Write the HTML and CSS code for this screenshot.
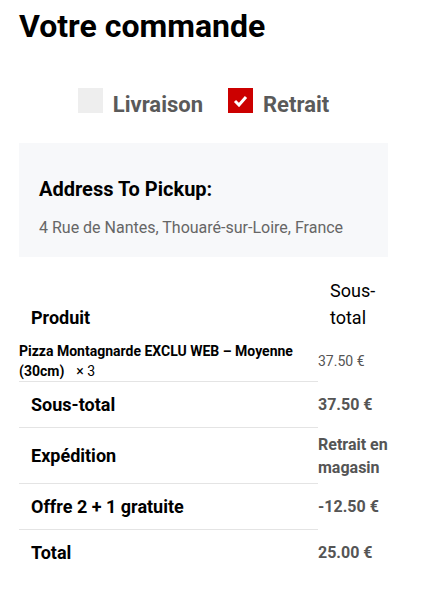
FILE: index.html
```html
<!DOCTYPE html>
<html lang="fr">
<head>
  <meta charset="UTF-8" />
  <meta name="viewport" content="width=device-width, initial-scale=1.0" />
  <title>Votre commande</title>
  <link rel="stylesheet" href="styles.css">
</head>
<body>
  <div class="container">
    <h1>Votre commande</h1>

    <div class="mode-choice">
      <label class="mode">
        <span class="box"></span>
        <span class="mode-label">Livraison</span>
      </label>
      <label class="mode">
        <span class="box checked">
          <svg width="15" height="12" viewBox="0 0 15 12"><polyline points="2,6 6,10 13,2" fill="none" stroke="#fff" stroke-width="3"/></svg>
        </span>
        <span class="mode-label">Retrait</span>
      </label>
    </div>

    <div class="pickup">
      <h3>Address To Pickup:</h3>
      <p>4 Rue de Nantes, Thouaré-sur-Loire, France</p>
    </div>

    <table class="order-table">
      <thead>
        <tr>
          <th class="col-product">Produit</th>
          <th class="col-total">Sous-total</th>
        </tr>
      </thead>
      <tbody>
        <tr class="cart-item">
          <td class="product-name">Pizza Montagnarde EXCLU WEB – Moyenne (30cm)<span class="qty">× 3</span></td>
          <td class="product-total">37.50 €</td>
        </tr>
      </tbody>
      <tfoot>
        <tr>
          <th>Sous-total</th>
          <td>37.50 €</td>
        </tr>
        <tr>
          <th>Expédition</th>
          <td>Retrait en magasin</td>
        </tr>
        <tr>
          <th>Offre 2 + 1 gratuite</th>
          <td>-12.50 €</td>
        </tr>
        <tr class="order-total">
          <th>Total</th>
          <td>25.00 €</td>
        </tr>
      </tfoot>
    </table>
  </div>
</body>
</html>
```

FILE: styles.css
```css
* {
  margin: 0;
  padding: 0;
  box-sizing: border-box;
  font-family: Roboto, 'Liberation Sans', sans-serif;
}
body {
  background: #fff;
  color: #000;
}
.container {
  width: 369px;
  margin-left: 19px;
  padding-top: 7px;
}
h1 {
  font-size: 32px;
  font-weight: 700;
  line-height: 38px;
}
.mode-choice {
  display: flex;
  justify-content: center;
  gap: 25px;
  margin-top: 43px;
}
.mode {
  display: flex;
  align-items: flex-end;
  gap: 10px;
  font-size: 22px;
  font-weight: 700;
  color: #5a5a5a;
}
.mode-label {
  line-height: 17px;
}
.box {
  width: 25px;
  height: 25px;
  background: #eeeeee;
  display: flex;
  align-items: center;
  justify-content: center;
}
.box.checked {
  background: #cc0000;
}
.pickup {
  margin-top: 30px;
  background: #f7f8fa;
  padding: 34px 20px 17px;
}
.pickup h3 {
  font-size: 20px;
  font-weight: 700;
  line-height: 24px;
}
.pickup p {
  margin-top: 15px;
  font-size: 16px;
  color: #666;
  line-height: 24px;
}
.order-table {
  width: 372px;
  margin-top: 13px;
  border-collapse: collapse;
  table-layout: fixed;
}
.col-product {
  width: 299px;
}
.order-table thead th {
  font-size: 18px;
  line-height: 27px;
  text-align: left;
  padding: 7px 12px 10px;
  vertical-align: bottom;
}
.order-table .col-total {
  font-weight: 400;
}
.product-name {
  font-size: 14px;
  font-weight: 700;
  line-height: 20px;
  padding: 0;
  border-bottom: 1px solid #e4e4e4;
}
.qty {
  display: inline-block;
  font-weight: 400;
  margin-left: 12px;
}
.product-total {
  font-size: 14px;
  color: #555;
  vertical-align: middle;
}
.order-table tfoot th {
  font-size: 18px;
  font-weight: 700;
  text-align: left;
  line-height: 21px;
  padding: 12px;
  border-bottom: 1px solid #e4e4e4;
}
.order-table tfoot tr:last-child th {
  border-bottom: none;
}
.order-table tfoot td {
  font-size: 16px;
  font-weight: 700;
  color: #555;
  line-height: 23px;
  padding: 5px 0;
  vertical-align: middle;
}
```
